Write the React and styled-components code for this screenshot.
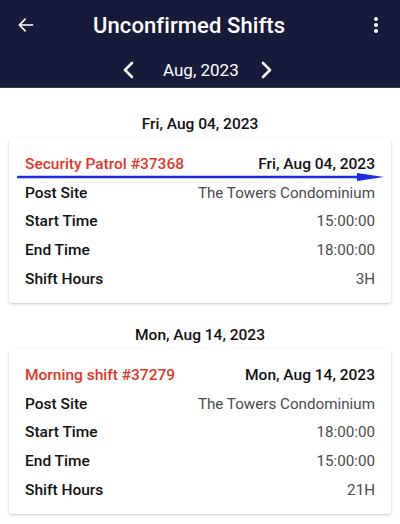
import React from "react";
import styled, { createGlobalStyle } from "styled-components";

const GlobalStyle = createGlobalStyle`
  html, body {
    margin: 0;
    padding: 0;
    background: #ffffff;
    font-family: Roboto, "Noto Sans", sans-serif;
  }
`;

const Page = styled.div`
  width: 400px;
  height: 524px;
  overflow: hidden;
  background: #ffffff;
`;

const Header = styled.header`
  background: #181a3b;
  height: 87px;
  border-bottom: 1px solid #3a3c5c;
  display: flex;
  flex-direction: column;
  color: #ffffff;
`;

const TopBar = styled.div`
  height: 52px;
  display: flex;
  align-items: center;
  padding: 0 12px 0 14px;
`;

const IconButton = styled.button`
  width: 24px;
  height: 24px;
  padding: 0;
  border: none;
  background: none;
  color: #ffffff;
  display: flex;
  align-items: center;
  justify-content: center;
`;

const MenuButton = styled(IconButton)`
  margin-left: auto;
`;

const Title = styled.h1`
  margin: 0 0 0 55px;
  font-size: 22px;
  font-weight: 500;
  letter-spacing: 0.1px;
`;

const MonthNav = styled.div`
  display: flex;
  align-items: center;
  height: 38px;
  padding: 3px 0 0 117px;
  box-sizing: border-box;
`;

const MonthLabel = styled.span`
  font-size: 17px;
  margin: 0 15px 0 22px;
`;

const List = styled.main`
  padding: 0 9px;
`;

const Section = styled.section`
  padding-top: ${(p) => p.$top}px;
`;

const DayHeading = styled.h2`
  margin: 0 0 4px;
  text-align: center;
  font-size: 15.5px;
  font-weight: 500;
  line-height: 20px;
  color: #111111;
`;

const Card = styled.div`
  position: relative;
  background: #ffffff;
  border-radius: 3px;
  box-shadow: 0 1px 3px rgba(0, 0, 0, 0.22);
  padding: 12px 16px 10px;
`;

const Row = styled.div`
  display: flex;
  justify-content: space-between;
  align-items: center;
  height: 28.6px;
  font-size: 15.5px;
`;

const Label = styled.span`
  font-weight: 500;
  color: ${(p) => (p.$accent ? "#e3352b" : "#111111")};
`;

const Value = styled.span`
  color: ${(p) => (p.$strong ? "#111111" : "#4a4a4a")};
  font-weight: ${(p) => (p.$strong ? 500 : 400)};
  font-size: ${(p) => (p.$strong ? "15.5px" : "15.2px")};
`;

const Arrow = styled.svg`
  position: absolute;
  left: 8px;
  top: 34px;
`;

const shifts = [
  {
    day: "Fri, Aug 04, 2023",
    name: "Security Patrol #37368",
    site: "The Towers Condominium",
    start: "15:00:00",
    end: "18:00:00",
    hours: "3H",
    arrow: true,
  },
  {
    day: "Mon, Aug 14, 2023",
    name: "Morning shift #37279",
    site: "The Towers Condominium",
    start: "18:00:00",
    end: "15:00:00",
    hours: "21H",
  },
];

export default function App() {
  return (
    <Page>
      <GlobalStyle />
      <Header>
        <TopBar>
          <IconButton aria-label="Back">
            <svg width="20" height="20" viewBox="0 0 24 24" fill="none" stroke="#fff" strokeWidth="2" strokeLinecap="round" strokeLinejoin="round">
              <path d="M20 12H4M11 5l-7 7 7 7" />
            </svg>
          </IconButton>
          <Title>Unconfirmed Shifts</Title>
          <MenuButton aria-label="More">
            <svg width="6" height="18" viewBox="0 0 6 18" fill="#fff">
              <circle cx="3" cy="3" r="2" />
              <circle cx="3" cy="9" r="2" />
              <circle cx="3" cy="15" r="2" />
            </svg>
          </MenuButton>
        </TopBar>
        <MonthNav>
          <IconButton aria-label="Previous month">
            <svg width="14" height="20" viewBox="0 0 14 20" fill="none" stroke="#fff" strokeWidth="2.6" strokeLinecap="round" strokeLinejoin="round">
              <path d="M10 3L3 10l7 7" />
            </svg>
          </IconButton>
          <MonthLabel>Aug, 2023</MonthLabel>
          <IconButton aria-label="Next month">
            <svg width="14" height="20" viewBox="0 0 14 20" fill="none" stroke="#fff" strokeWidth="2.6" strokeLinecap="round" strokeLinejoin="round">
              <path d="M4 3l7 7-7 7" />
            </svg>
          </IconButton>
        </MonthNav>
      </Header>
      <List>
        {shifts.map((s, i) => (
          <Section key={s.name} $top={i === 0 ? 26 : 22}>
            <DayHeading>{s.day}</DayHeading>
            <Card>
              <Row>
                <Label $accent>{s.name}</Label>
                <Value $strong>{s.day}</Value>
              </Row>
              <Row>
                <Label>Post Site</Label>
                <Value>{s.site}</Value>
              </Row>
              <Row>
                <Label>Start Time</Label>
                <Value>{s.start}</Value>
              </Row>
              <Row>
                <Label>End Time</Label>
                <Value>{s.end}</Value>
              </Row>
              <Row>
                <Label>Shift Hours</Label>
                <Value>{s.hours}</Value>
              </Row>
              {s.arrow && (
                <Arrow width="368" height="10" viewBox="0 0 368 10">
                  <line x1="1" y1="5" x2="345" y2="5" stroke="#1c2ce6" strokeWidth="2.4" strokeLinecap="round" />
                  <polygon points="340,1 367,5 340,9" fill="#1c2ce6" />
                </Arrow>
              )}
            </Card>
          </Section>
        ))}
      </List>
    </Page>
  );
}
